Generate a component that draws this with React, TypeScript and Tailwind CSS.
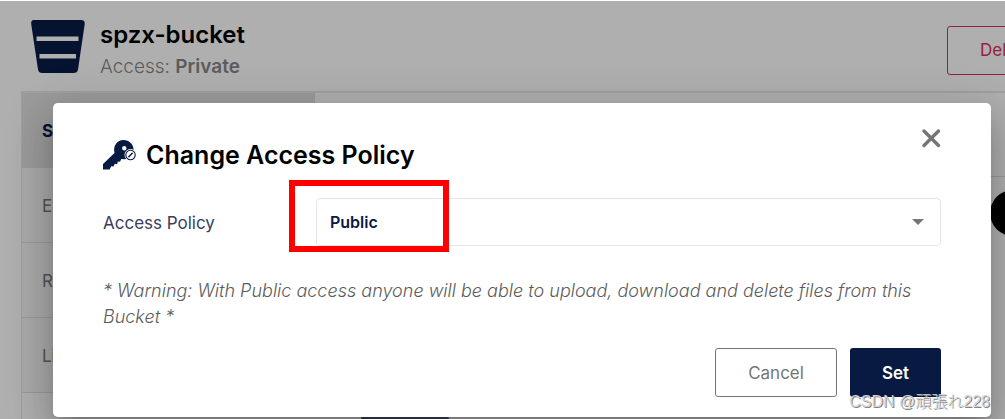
import React, { useState } from 'react';

const tabs = ['Summary', 'Events', 'Replication', 'Lifecycle'];

const BucketIcon: React.FC = () => (
    <svg width="56" height="56" viewBox="0 0 56 56" className="shrink-0 text-[#051230]" aria-hidden="true">
        <path
            fill="currentColor"
            fillRule="evenodd"
            d="M4 1H51Q55.200 1 54.700 5L48 50.500Q47.400 54 43.500 54H12.500Q8.600 54 8 50.500L1.200 5Q.8 1 4 1ZM6.500 17.500V22H48.500V17.500ZM9.500 35V39.500H46V35Z"
        />
    </svg>
);

const KeyIcon: React.FC = () => (
    <svg width="33" height="30" viewBox="0 0 33 30" className="shrink-0" aria-hidden="true">
        <path
            fill="#081a41"
            fillRule="evenodd"
            d="M20.500 0C26 0 30.300 4 30.500 9C30.600 14.500 27 19 21.500 19.300L18.300 19L17 21.800L14.800 21.600L14.200 24.200L11.800 23.800L10.500 26.600L8.300 26.200L6.600 29.600H0V24L11.500 13C9.800 6 14 0 20.500 0ZM21.300 6A2.200 2.200 0 1 0 21.300 10.400A2.200 2.200 0 1 0 21.300 6Z"
        />
        <circle cx="27.500" cy="15" r="6" fill="#fff" />
        <circle cx="27.500" cy="15" r="4.700" fill="none" stroke="#081a41" strokeWidth="1.100" />
        <path d="M25.800 16.700L29.200 13.300" stroke="#081a41" strokeWidth="1.500" strokeLinecap="round" />
    </svg>
);

const BucketPage: React.FC = () => (
    <div className="flex h-full flex-col border-t border-white bg-[#afafaf]">
        <header className="flex h-[90px] shrink-0 items-start pl-[30px] pt-[18px]">
            <BucketIcon />
            <div className="ml-[14px] min-w-0 flex-1">
                <h1 className="text-2xl font-semibold leading-8 text-black">spzx-bucket</h1>
                <p className="text-[19px] font-light leading-8 text-[#5c5c5c]">
                    Access: <strong className="font-semibold">Private</strong>
                </p>
            </div>
            <button className="-mr-[110px] mt-[7px] h-[49px] w-[168px] shrink-0 whitespace-nowrap rounded-[3px] border border-[#95213b] pl-8 text-left text-[17px] text-[#95213b]">
                Delete Bucket
            </button>
        </header>
        <div className="ml-[21px] flex min-h-0 flex-1 border-l border-t-2 border-[#9f9f9f]">
            <nav className="w-[293px] shrink-0">
                {tabs.map((tab, i) => (
                    <button
                        key={tab}
                        className={
                            'block h-[75px] w-full border-b border-[#9b9b9b] pl-5 pt-1 text-left text-[17px] ' +
                            (i === 0 ? 'bg-[#9b9b9b] font-bold text-[#051230]' : 'bg-[#aaaaaa] text-[#535353]')
                        }
                    >
                        {tab}
                    </button>
                ))}
            </nav>
            <main className="min-w-0 flex-1">
                <div className="h-[84px] border-b border-[#9b9b9b]" />
                <div className="flex justify-end pt-[13px]">
                    <div className="-mr-[31px] size-[46px] shrink-0 rounded-full bg-black" />
                </div>
                <div className="ml-[46px] mt-[180px] h-[46px] w-[88px] rounded-[3px] bg-[#3d414d]" />
            </main>
        </div>
    </div>
);

const AccessPolicyDialog: React.FC = () => {
    const [policy, setPolicy] = useState('Public');

    return (
        <div
            role="dialog"
            aria-labelledby="dialog-title"
            className="rounded-[5px] bg-white px-[50px] pb-5 pt-5 shadow-[0_11px_15px_-7px_rgba(0,0,0,0.2),0_24px_38px_3px_rgba(0,0,0,0.14),0_9px_46px_8px_rgba(0,0,0,0.12)]"
        >
            <div className="flex items-start justify-between">
                <div className="mt-4 flex items-center gap-[10px]">
                    <KeyIcon />
                    <h2 id="dialog-title" className="text-[25px] font-semibold leading-8 text-black">Change Access Policy</h2>
                </div>
                <button aria-label="Close" className="mt-[5px] text-[#757575]">
                    <svg width="20" height="20" viewBox="0 0 20 20" fill="none" stroke="currentColor" strokeWidth="3.400" strokeLinecap="round">
                        <path d="M3 3L17.500 17.500M17.500 3L3 17.500" />
                    </svg>
                </button>
            </div>

            <div className="mt-[27px] flex items-center">
                <label htmlFor="policy" className="w-[213px] shrink-0 pt-[3px] text-[17px] text-[#36405c]">Access Policy</label>
                <div className="relative flex-1">
                    <select
                        id="policy"
                        value={policy}
                        onChange={(e) => setPolicy(e.target.value)}
                        className="h-12 w-full appearance-none rounded-[4px] border border-[#e5e5e5] bg-white px-[13px] text-base font-semibold text-[#081a41]"
                    >
                        <option>Public</option>
                        <option>Private</option>
                    </select>
                    <svg width="12" height="6" viewBox="0 0 12 6" className="pointer-events-none absolute right-[17px] top-[21px]" aria-hidden="true">
                        <path d="M0 0H12L6 6Z" fill="#757575" />
                    </svg>
                    {/* highlight around the selected policy */}
                    <div className="pointer-events-none absolute -left-[27px] -top-[18px] h-[72px] w-[160px] border-6 border-[#ff0000]" />
                </div>
            </div>

            <p className="mt-8 pr-4 text-lg font-light italic leading-[26px] text-[#5c5c5c]">
                * Warning: With Public access anyone will be able to upload, download and delete files from this Bucket *
            </p>

            <div className="mt-[18px] flex justify-end gap-[13px]">
                <button className="h-[49px] rounded-[3px] border border-[#757575] px-8 pt-[3px] text-[17px] text-[#757575]">Cancel</button>
                <button className="h-[49px] rounded-[3px] bg-[#081a41] px-8 pt-[3px] text-[17px] font-semibold text-white">Set</button>
            </div>
        </div>
    );
};

export default function App() {
    return (
        <div className="relative h-screen overflow-hidden font-['Inter','Noto_Sans_CJK_JP',sans-serif]">
            <BucketPage />
            <div className="absolute inset-0 pl-[53px] pr-[14px] pt-[103px]">
                <AccessPolicyDialog />
            </div>
            <span className="absolute bottom-[7px] right-[15px] font-['Liberation_Sans','Noto_Sans_CJK_JP',sans-serif] text-base font-light leading-5 text-[#d4d4d4] [text-shadow:1px_1px_0_#858585]">
                CSDN @頑張れ228
            </span>
        </div>
    );
}
